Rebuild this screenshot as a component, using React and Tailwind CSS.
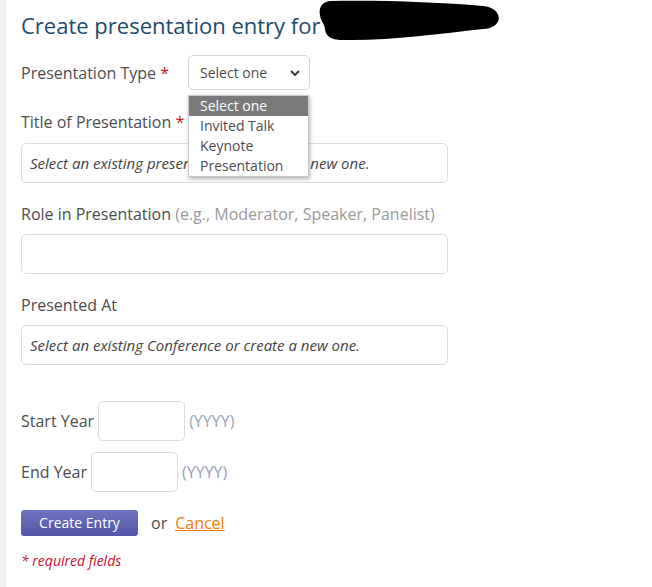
import React from "react";

const font = { fontFamily: '"Open Sans", "Noto Sans", sans-serif' };

function Req() {
  return <span className="text-[#c8102e]"> *</span>;
}

export default function App() {
  return (
    <div className="flex min-h-[587px] w-[652px] bg-white" style={font}>
      <div className="w-[6px] shrink-0 bg-[#f2f2ee]" />
      <div className="relative flex-1 pl-[15px] pt-[10px]">
        <h1 className="relative text-[22px] leading-[30px] text-[#1e4a6a]">
          Create presentation entry for
        </h1>
        <svg
          className="absolute left-[312px] top-0"
          width="190"
          height="42"
          viewBox="0 0 190 42"
        >
          <path
            d="M12 1 C60 0 120 2 165 6 C186 8 186 28 165 29 C120 34 70 41 25 40 C6 40 8 31 6 25 C-1 15 0 2 12 1 Z"
            fill="#000"
          />
        </svg>

        <div className="mt-[15px] flex items-center">
          <label className="w-[167px] text-[16px] leading-[20px] text-[#4d4d4d]">
            Presentation Type<Req />
          </label>
          <div className="relative">
            <div className="flex h-[35px] w-[122px] items-center justify-between rounded-[5px] border border-[#d6d6d6] bg-white pl-[11px] pr-[9px] text-[14px] text-[#4d4d4d]">
              <span>Select one</span>
              <svg width="10" height="6" viewBox="0 0 10 6">
                <polyline
                  points="1,1 5,5 9,1"
                  fill="none"
                  stroke="#333"
                  strokeWidth="1.8"
                />
              </svg>
            </div>
            <ul className="absolute left-0 top-[40px] z-10 w-[121px] border border-[#c9c9c9] bg-white text-[14px] leading-[20px] text-[#4d4d4d] shadow-[1px_2px_4px_rgba(0,0,0,0.3)]">
              <li className="bg-[#7a7a7a] pl-[11px] text-white">Select one</li>
              <li className="pl-[11px]">Invited Talk</li>
              <li className="pl-[11px]">Keynote</li>
              <li className="pl-[11px]">Presentation</li>
            </ul>
          </div>
        </div>

        <label className="mt-[22px] block text-[16px] leading-[20px] text-[#4d4d4d]">
          Title of Presentation<Req />
        </label>
        <div className="mt-[11px] flex h-[40px] w-[427px] items-center rounded-[5px] border border-[#dcdcdc] px-[8px] text-[15px] italic text-[#444]">
          Select an existing presentation or create a new one.
        </div>

        <label className="mt-[21px] block text-[16px] leading-[20px] text-[#4d4d4d]">
          Role in Presentation{" "}
          <span className="text-[#9a9a9a]">(e.g., Moderator, Speaker, Panelist)</span>
        </label>
        <div className="mt-[10px] h-[40px] w-[427px] rounded-[5px] border border-[#dcdcdc]" />

        <label className="mt-[21px] block text-[16px] leading-[20px] text-[#4d4d4d]">
          Presented At
        </label>
        <div className="mt-[10px] flex h-[40px] w-[427px] items-center rounded-[5px] border border-[#dcdcdc] px-[8px] text-[15px] italic text-[#444]">
          Select an existing Conference or create a new one.
        </div>

        <div className="mt-[36px] flex items-center">
          <label className="text-[16px] leading-[20px] text-[#4d4d4d]">Start Year</label>
          <div className="ml-[4px] h-[40px] w-[87px] rounded-[5px] border border-[#dcdcdc]" />
          <span className="ml-[4px] text-[16px] text-[#9aa3b5]">(YYYY)</span>
        </div>

        <div className="mt-[11px] flex items-center">
          <label className="text-[16px] leading-[20px] text-[#4d4d4d]">End Year</label>
          <div className="ml-[4px] h-[40px] w-[87px] rounded-[5px] border border-[#dcdcdc]" />
          <span className="ml-[4px] text-[16px] text-[#9aa3b5]">(YYYY)</span>
        </div>

        <div className="mt-[18px] flex items-center">
          <button className="h-[26px] w-[117px] rounded-[3px] bg-gradient-to-b from-[#6f74be] to-[#5256a6] text-[14px] leading-[26px] text-white">
            Create Entry
          </button>
          <span className="ml-[13px] text-[16px] text-[#4d4d4d]">or</span>
          <a className="ml-[8px] text-[16px] text-[#f47b00] underline" href="#">
            Cancel
          </a>
        </div>

        <p className="mt-[16px] text-[14px] italic leading-[18px] text-[#c8102e]">
          * required fields
        </p>
      </div>
    </div>
  );
}
